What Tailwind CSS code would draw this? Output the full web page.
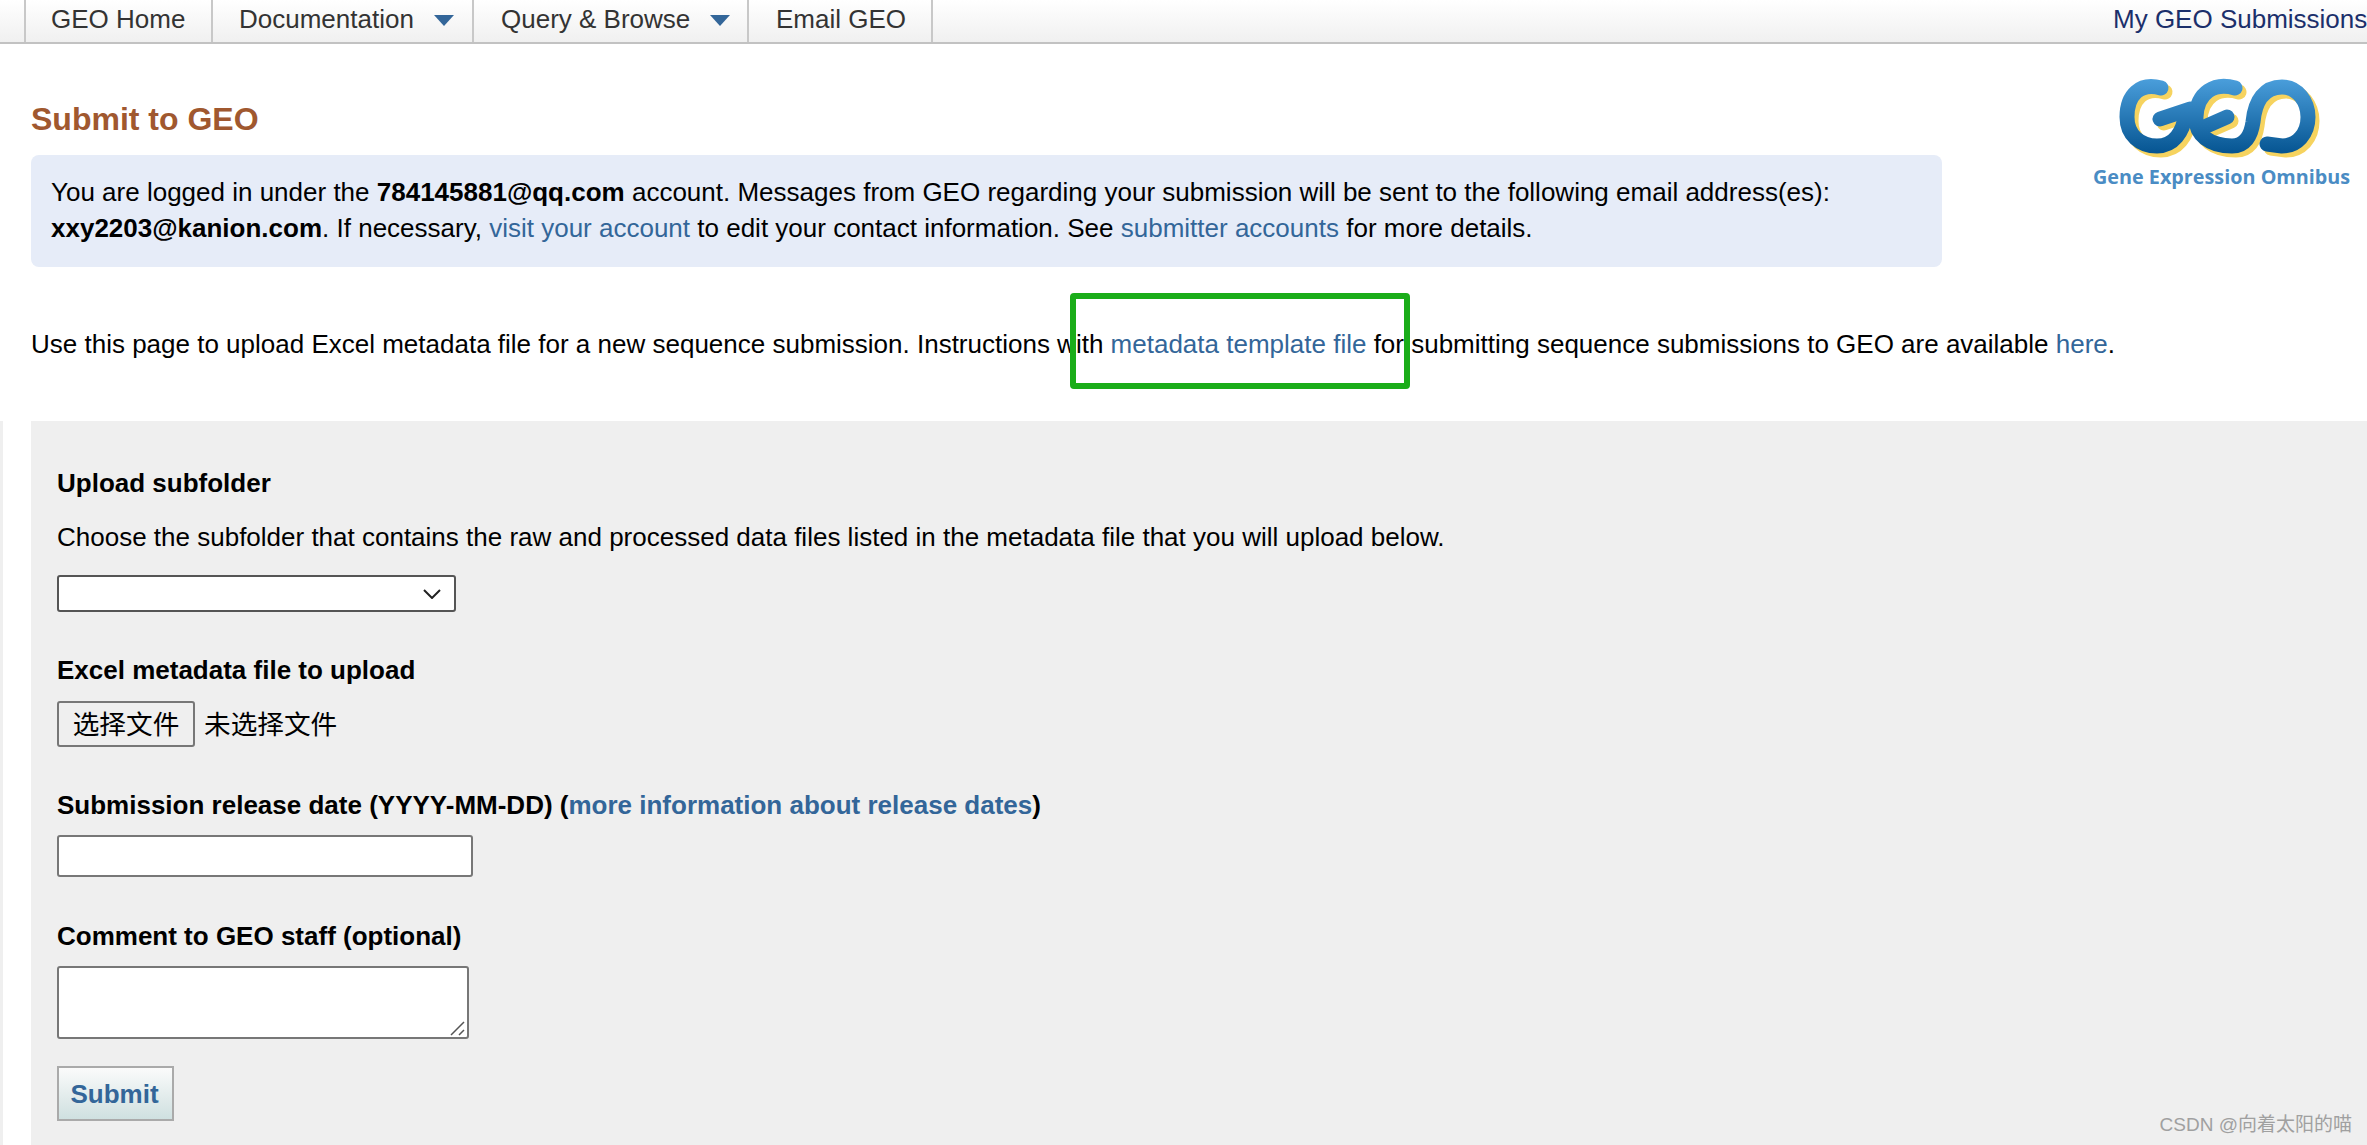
<!DOCTYPE html>
<html lang="en">
<head>
<meta charset="UTF-8">
<title>Submit to GEO</title>
<script src="https://cdn.jsdelivr.net/npm/@tailwindcss/browser@4"></script>
</head>
<body class="relative h-[1145px] overflow-hidden bg-white text-black text-[26px] leading-[36px]" style="font-family:'Liberation Sans','Noto Sans CJK SC',sans-serif">

<!-- top nav -->
<nav class="flex h-[44px] items-stretch justify-between border-b-2 border-[#c2c2c2] bg-gradient-to-b from-white to-[#f0f0f0] text-[26px] leading-[36px] text-[#333]">
  <ul class="ml-[24px] flex border-l-2 border-[#c8c8c8]">
    <li class="flex w-[187px] items-center border-r-2 border-[#c8c8c8] pb-[5px] pl-[25px]">GEO Home</li>
    <li class="flex w-[261px] items-center border-r-2 border-[#c8c8c8] pb-[5px] pl-[26px]">Documentation<span class="mt-[3px] ml-[20px] h-0 w-0 border-x-[10px] border-t-[11px] border-x-transparent border-t-[#336699]"></span></li>
    <li class="flex w-[275px] items-center border-r-2 border-[#c8c8c8] pb-[5px] pl-[27px]">Query &amp; Browse<span class="mt-[3px] ml-[20px] h-0 w-0 border-x-[10px] border-t-[11px] border-x-transparent border-t-[#336699]"></span></li>
    <li class="flex w-[184px] items-center border-r-2 border-[#c8c8c8] pb-[5px] pl-[27px]">Email GEO</li>
  </ul>
  <div class="flex w-[254px] items-center pb-[5px] whitespace-nowrap text-[#1b2f6b]">My GEO Submissions</div>
</nav>

<main>
  <div class="flex pl-[31px]">
    <div class="w-[1911px]">
      <h1 class="mt-[57px] text-[32px] leading-[36px] font-bold text-[#a0582f]">Submit to GEO</h1>
      <div class="mt-[18px] h-[112px] rounded-[8px] bg-[#e6ecf8] px-[20px] py-[19px]">
        You are logged in under the <b>784145881@qq.com</b> account. Messages from GEO regarding your submission will be sent to the following email address(es):<br>
        <b>xxy2203@kanion.com</b>. If necessary, <a class="text-[#336699]">visit your account</a> to edit your contact information. See <a class="text-[#336699]">submitter accounts</a> for more details.
      </div>
    </div>
    <div class="ml-[143px] mt-[26px] w-[270px]">
      <svg class="block" width="270" height="95" viewBox="0 0 270 95" fill="none" stroke-linecap="round" stroke-linejoin="round">
        <defs>
          <linearGradient id="geoBlue" gradientUnits="userSpaceOnUse" x1="0" y1="8" x2="0" y2="86">
            <stop offset="0" stop-color="#4b9fdc"/>
            <stop offset="1" stop-color="#03528f"/>
          </linearGradient>
        </defs>
        <g stroke="#f6d35f" stroke-width="15" transform="translate(4 4)">
          <path d="M76 18C55 12 42 25 42 47C42 65 55 76 72 76C88 76 98 63 101 43"/>
          <path d="M75 49L105 39"/>
          <path d="M117 58L142 47"/>
          <path d="M150 18C130 12 112 22 111 47C110 65 125 76 147 76C160 76 166 66 168 52C170 30 180 17 197 17C213 17 223 32 223 47C223 64 212 76 197 76L182 74"/>
        </g>
        <g stroke="url(#geoBlue)" stroke-width="15">
          <path d="M76 18C55 12 42 25 42 47C42 65 55 76 72 76C88 76 98 63 101 43"/>
          <path d="M75 49L105 39"/>
          <path d="M117 58L142 47"/>
          <path d="M150 18C130 12 112 22 111 47C110 65 125 76 147 76C160 76 166 66 168 52C170 30 180 17 197 17C213 17 223 32 223 47C223 64 212 76 197 76L182 74"/>
        </g>
      </svg>
      <div class="pl-[8px] text-[19.8px] leading-[24px] font-bold whitespace-nowrap text-[#4a8cc4]" style="font-family:'Open Sans',sans-serif">Gene Expression Omnibus</div>
    </div>
  </div>

  <p class="mt-[59px] pl-[31px]">Use this page to upload Excel metadata file for a new sequence submission. Instructions with <a class="text-[#336699]">metadata template file</a> for submitting sequence submissions to GEO are available <a class="text-[#336699]">here</a>.</p>

  <div class="mt-[59px] flex h-[724px]">
    <div class="w-[3px] bg-[#efefef]"></div>
    <form class="ml-[28px] flex-1 bg-[#efefef] pl-[26px]">
      <h3 class="pt-[44px] font-bold">Upload subfolder</h3>
      <p class="mt-[18px]">Choose the subfolder that contains the raw and processed data files listed in the metadata file that you will upload below.</p>
      <div class="mt-[20px] flex h-[37px] w-[399px] items-center justify-end rounded-[3px] border-2 border-[#555] bg-white pr-[13px]">
        <svg width="18" height="10" viewBox="0 0 18 10" fill="none" stroke="#222" stroke-width="2"><path d="M1 1L9 9L17 1"/></svg>
      </div>
      <h3 class="mt-[40px] font-bold">Excel metadata file to upload</h3>
      <div class="mt-[13px] flex h-[46px] items-center text-[26.67px] leading-[40px]">
        <span class="flex h-[46px] w-[138px] items-center justify-center rounded-[3px] border-2 border-[#777] bg-[#efefef] pt-[1px]">选择文件</span>
        <span class="ml-[9px] pt-[1px]">未选择文件</span>
      </div>
      <h3 class="mt-[40px] font-bold">Submission release date (YYYY-MM-DD) (<a class="text-[#336699]">more information about release dates</a>)</h3>
      <div class="mt-[12px] h-[42px] w-[416px] rounded-[3px] border-2 border-[#777] bg-white"></div>
      <h3 class="mt-[41px] font-bold">Comment to GEO staff (optional)</h3>
      <div class="relative mt-[12px] h-[73px] w-[412px] rounded-[3px] border-2 border-[#777] bg-white">
        <svg class="absolute right-[1px] bottom-[1px]" width="16" height="16" viewBox="0 0 16 16" stroke="#555" stroke-width="1.5"><path d="M1 15L14 2M9 15L14 10"/></svg>
      </div>
      <button type="button" class="mt-[27px] flex h-[55px] w-[117px] items-center justify-center border-2 border-[#aaa] bg-gradient-to-b from-[#fbfbfb] to-[#cfe0e0] pr-[2px] text-[26px] font-bold text-[#336699]">Submit</button>
    </form>
  </div>
</main>

<!-- screenshot annotation and watermark -->
<div class="absolute top-[293px] left-[1070px] h-[96px] w-[340px] rounded-[4px] border-[6px] border-[#1aad19]"></div>
<div class="absolute top-[1114px] right-[15px] text-[19px] leading-[22px] text-[#a0a0a0]">CSDN @向着太阳的喵</div>
</body>
</html>
